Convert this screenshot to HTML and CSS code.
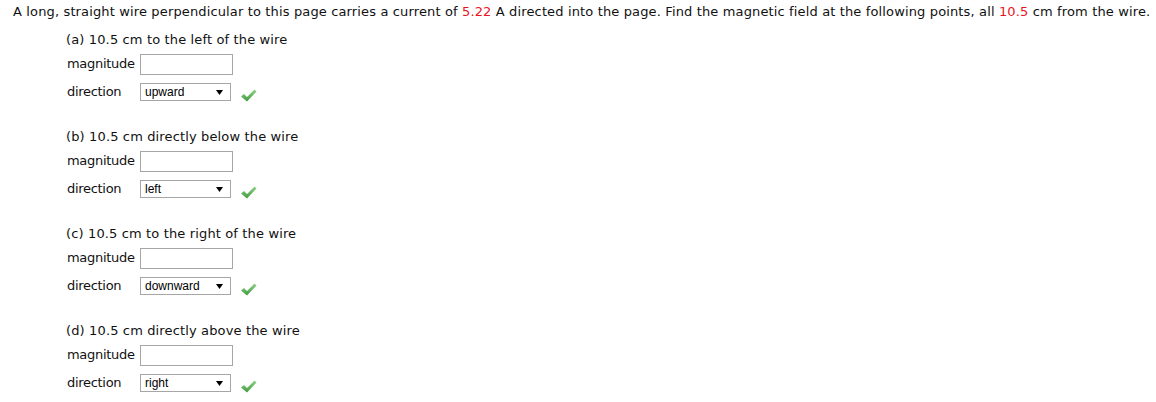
FILE: index.html
```html
<!DOCTYPE html>
<html>
<head>
<meta charset="utf-8">
<link rel="stylesheet" href="styles.css">
</head>
<body>
<div class="page">
  <p class="question">A long, straight wire perpendicular to this page carries a current of <span class="val">5.22</span> A directed into the page. Find the magnetic field at the following points, all <span class="val">10.5</span> cm from the wire.</p>

  <div class="part">
    <div class="part-title">(a) 10.5 cm to the left of the wire</div>
    <div class="row row-mag"><span class="lbl">magnitude</span><span class="input"></span></div>
    <div class="row row-dir"><span class="lbl">direction</span><span class="select"><span class="opt">upward</span><svg class="arrow" width="7" height="5" viewBox="0 0 7 5"><path d="M0 0 H7 L3.5 5 Z" fill="#000"/></svg></span><svg class="check" width="17" height="15" viewBox="0 0 17 15"><defs><linearGradient id="ga" x1="0" y1="0" x2="0" y2="1"><stop offset="0" stop-color="#8fd58a"/><stop offset="1" stop-color="#3f9a3c"/></linearGradient></defs><path d="M1 8.5 L4 6 L7 9 L14.5 1.5 L16.5 3.5 L7 13.5 Z" fill="url(#ga)"/></svg></div>
  </div>

  <div class="part">
    <div class="part-title">(b) 10.5 cm directly below the wire</div>
    <div class="row row-mag"><span class="lbl">magnitude</span><span class="input"></span></div>
    <div class="row row-dir"><span class="lbl">direction</span><span class="select"><span class="opt">left</span><svg class="arrow" width="7" height="5" viewBox="0 0 7 5"><path d="M0 0 H7 L3.5 5 Z" fill="#000"/></svg></span><svg class="check" width="17" height="15" viewBox="0 0 17 15"><path d="M1 8.5 L4 6 L7 9 L14.5 1.5 L16.5 3.5 L7 13.5 Z" fill="url(#ga)"/></svg></div>
  </div>

  <div class="part">
    <div class="part-title">(c) 10.5 cm to the right of the wire</div>
    <div class="row row-mag"><span class="lbl">magnitude</span><span class="input"></span></div>
    <div class="row row-dir"><span class="lbl">direction</span><span class="select"><span class="opt">downward</span><svg class="arrow" width="7" height="5" viewBox="0 0 7 5"><path d="M0 0 H7 L3.5 5 Z" fill="#000"/></svg></span><svg class="check" width="17" height="15" viewBox="0 0 17 15"><path d="M1 8.5 L4 6 L7 9 L14.5 1.5 L16.5 3.5 L7 13.5 Z" fill="url(#ga)"/></svg></div>
  </div>

  <div class="part">
    <div class="part-title">(d) 10.5 cm directly above the wire</div>
    <div class="row row-mag"><span class="lbl">magnitude</span><span class="input"></span></div>
    <div class="row row-dir"><span class="lbl">direction</span><span class="select"><span class="opt">right</span><svg class="arrow" width="7" height="5" viewBox="0 0 7 5"><path d="M0 0 H7 L3.5 5 Z" fill="#000"/></svg></span><svg class="check" width="17" height="15" viewBox="0 0 17 15"><path d="M1 8.5 L4 6 L7 9 L14.5 1.5 L16.5 3.5 L7 13.5 Z" fill="url(#ga)"/></svg></div>
  </div>
</div>
</body>
</html>
```

FILE: styles.css
```css
html, body {
  margin: 0;
  padding: 0;
  background: #fff;
}
.page {
  padding: 4px 0 0 13px;
  font-family: "DejaVu Sans", Verdana, sans-serif;
  font-size: 13px;
  letter-spacing: 0.14px;
  color: #111;
}
.question {
  margin: 0 0 12px 0;
  line-height: 16px;
  white-space: nowrap;
}
.val {
  color: #e8141f;
}
.part {
  margin-left: 53px;
  margin-bottom: 28px;
}
.part-title {
  line-height: 16px;
}
.row {
  display: flex;
  align-items: center;
  padding-left: 1px;
}
.row-mag {
  height: 20px;
  margin-top: 6px;
}
.row-dir {
  height: 18px;
  margin-top: 9px;
}
.lbl {
  width: 73px;
  line-height: 16px;
  letter-spacing: -0.3px;
}
.input {
  display: block;
  box-sizing: border-box;
  width: 93px;
  height: 21px;
  border: 1px solid #a6a6a6;
  background: #fff;
}
.select {
  display: flex;
  justify-content: space-between;
  align-items: center;
  box-sizing: border-box;
  width: 91px;
  height: 18px;
  border: 1px solid #a6a6a6;
  padding: 0 7px 0 4px;
  font-family: "Liberation Sans", Arial, sans-serif;
  font-size: 12px;
  letter-spacing: 0;
  color: #000;
}
.arrow {
  display: block;
}
.check {
  display: block;
  margin-left: 9px;
  margin-top: 7px;
}
```
